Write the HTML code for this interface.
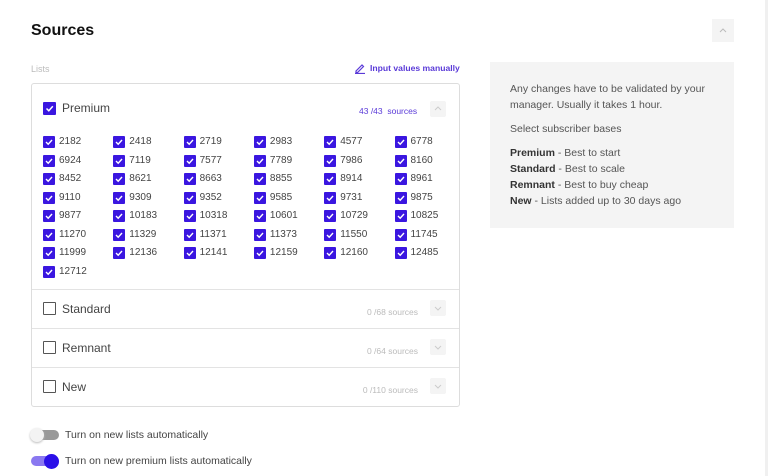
<!DOCTYPE html><html><head><style>
*{box-sizing:border-box;margin:0;padding:0}
body{width:768px;height:476px;background:#fff;font-family:"Liberation Sans",sans-serif;position:relative;overflow:hidden;color:#333}
.a{position:absolute}
.cb{position:absolute;width:12px;height:12px;background:#3a16e0;border-radius:1px}
.cb svg{position:absolute;left:1px;top:1px}
.n{position:absolute;font-size:10px;color:#444}
.ub{position:absolute;width:13px;height:13px;border:1.5px solid #555;border-radius:1px}
.row{position:absolute;left:32px;width:427px;border-top:1px solid #e3e3e3}
.lbl{position:absolute;font-size:12px;color:#444}
.cnt{position:absolute;font-size:8.5px;color:#bbb;text-align:right;width:80px}
.chev{position:absolute;width:16px;height:16px;background:#f4f4f4;border-radius:2px}
</style></head><body>
<div class="a" style="left:31px;top:22px;font-size:16px;font-weight:bold;color:#111">Sources</div>
<div class="a" style="left:712px;top:19px;width:22px;height:23px;background:#f4f4f4"><svg width="22" height="23"><path d="M8 13l3-3 3 3" stroke="#bbb" fill="none"/></svg></div>
<div class="a" style="left:31px;top:64px;font-size:9px;color:#bbb">Lists</div>
<svg class="a" style="left:354px;top:62px" width="12" height="12"><path d="M2 9l6-6 1.5 1.5-6 6H2z M1 11.5h10" stroke="#5a3ad8" fill="none" stroke-width="1.2"/></svg>
<div class="a" style="left:370px;top:63px;font-size:8.6px;color:#5a3ad8;font-weight:bold">Input values manually</div>
<div class="a" style="left:31px;top:83px;width:429px;height:324px;border:1px solid #ddd;border-radius:3px"></div>
<div class="cb" style="left:43px;top:102px;width:13px;height:13px"><svg width="11" height="11"><path d="M2.5 5.5l2.3 2.3 4-4.5" stroke="#fff" stroke-width="1.5" fill="none"/></svg></div>
<div class="lbl" style="left:62px;top:101px">Premium</div>
<div class="a" style="left:359px;top:106px;font-size:8.5px;color:#5a3ad8">43 /43&nbsp; sources</div>
<div class="chev" style="left:430px;top:101px"><svg width="16" height="16"><path d="M5 9l3-3 3 3" stroke="#ccc" fill="none"/></svg></div>
<div id="g"></div>
<div class="row" style="top:289px"></div>
<div class="row" style="top:328px"></div>
<div class="row" style="top:367px"></div>
<div class="ub" style="left:43px;top:302px"></div><div class="lbl" style="left:62px;top:302px">Standard</div>
<div class="cnt" style="left:338px;top:307px">0 /68 sources</div>
<div class="chev" style="left:430px;top:300px"><svg width="16" height="16"><path d="M5 7l3 3 3-3" stroke="#ccc" fill="none"/></svg></div>
<div class="ub" style="left:43px;top:341px"></div><div class="lbl" style="left:62px;top:341px">Remnant</div>
<div class="cnt" style="left:338px;top:346px">0 /64 sources</div>
<div class="chev" style="left:430px;top:339px"><svg width="16" height="16"><path d="M5 7l3 3 3-3" stroke="#ccc" fill="none"/></svg></div>
<div class="ub" style="left:43px;top:380px"></div><div class="lbl" style="left:62px;top:380px">New</div>
<div class="cnt" style="left:338px;top:385px">0 /110 sources</div>
<div class="chev" style="left:430px;top:378px"><svg width="16" height="16"><path d="M5 7l3 3 3-3" stroke="#ccc" fill="none"/></svg></div>
<div class="a" style="left:31px;top:430px;width:28px;height:10px;border-radius:5px;background:#999"></div>
<div class="a" style="left:30px;top:428px;width:14px;height:14px;border-radius:50%;background:#f3f3f3;box-shadow:0 1px 2px #bbb"></div>
<div class="a" style="left:65px;top:429px;font-size:10.5px;color:#444">Turn on new lists automatically</div>
<div class="a" style="left:31px;top:456px;width:28px;height:10px;border-radius:5px;background:#8a78f0"></div>
<div class="a" style="left:44px;top:454px;width:15px;height:15px;border-radius:50%;background:#2b10e8"></div>
<div class="a" style="left:65px;top:455px;font-size:10.5px;color:#444">Turn on new premium lists automatically</div>
<div class="a" style="left:490px;top:62px;width:244px;height:166px;background:#f4f4f4;padding:19px 10px 0 20px;font-size:10.5px;color:#555;line-height:16px">
<div>Any changes have to be validated by your manager. Usually it takes 1 hour.</div>
<div style="margin-top:8px">Select subscriber bases</div>
<div style="margin-top:8px"><b style="color:#333">Premium</b> - Best to start<br><b style="color:#333">Standard</b> - Best to scale<br><b style="color:#333">Remnant</b> - Best to buy cheap<br><b style="color:#333">New</b> - Lists added up to 30 days ago</div></div>
<div class="a" style="left:765px;top:0;width:3px;height:476px;background:#f0f0f0"></div>
<script>
var n=[2182,2418,2719,2983,4577,6778,6924,7119,7577,7789,7986,8160,8452,8621,8663,8855,8914,8961,9110,9309,9352,9585,9731,9875,9877,10183,10318,10601,10729,10825,11270,11329,11371,11373,11550,11745,11999,12136,12141,12159,12160,12485,12712];
var h='';n.forEach(function(v,i){var x=43+(i%6)*70.3,y=136+Math.floor(i/6)*18.5;
h+='<div class="cb" style="left:'+x+'px;top:'+y+'px"><svg width="10" height="10"><path d="M2 5l2.2 2.2 3.8-4.2" stroke="#fff" stroke-width="1.4" fill="none"/></svg></div><div class="n" style="left:'+(x+16)+'px;top:'+(y)+'px">'+v+'</div>';});
document.getElementById('g').innerHTML=h;
</script>
</body></html>
